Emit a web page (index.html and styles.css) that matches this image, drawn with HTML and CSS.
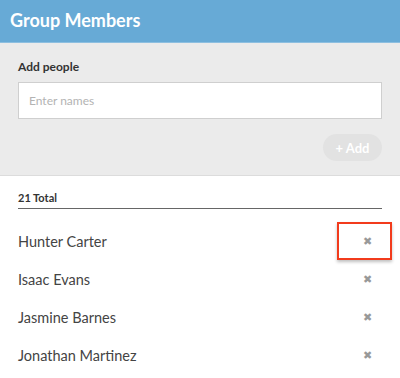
FILE: index.html
```html
<!DOCTYPE html>
<html lang="en">
<head>
  <meta charset="UTF-8">
  <meta name="viewport" content="width=device-width, initial-scale=1.0">
  <title>Group Members</title>
  <link rel="stylesheet" href="styles.css">
</head>
<body>
  <div class="panel">
    <div class="panel-header">Group Members</div>

    <!-- Add people form -->
    <div class="add-section">
      <label class="add-label" for="namesInput">Add people</label>
      <input id="namesInput" class="names-input" type="text" placeholder="Enter names">
      <div class="add-actions">
        <button class="add-button" disabled>+ Add</button>
      </div>
    </div>

    <!-- Member list -->
    <div class="members">
      <div class="members-total">21 Total</div>
      <div class="member-list">
        <div class="member-row">
          <span class="member-name">Hunter Carter</span>
          <span class="remove-wrap highlighted"><span class="remove">&#10006;</span></span>
        </div>
        <div class="member-row">
          <span class="member-name">Isaac Evans</span>
          <span class="remove-wrap"><span class="remove">&#10006;</span></span>
        </div>
        <div class="member-row">
          <span class="member-name">Jasmine Barnes</span>
          <span class="remove-wrap"><span class="remove">&#10006;</span></span>
        </div>
        <div class="member-row">
          <span class="member-name">Jonathan Martinez</span>
          <span class="remove-wrap"><span class="remove">&#10006;</span></span>
        </div>
      </div>
    </div>
  </div>
</body>
</html>
```

FILE: styles.css
```css
body {
  margin: 0;
  font-family: Lato, "Noto Sans", sans-serif;
  color: #444;
  background: #fff;
}

.panel {
  width: 400px;
}

.panel-header {
  height: 43px;
  box-sizing: border-box;
  padding: 9px 10px 0;
  background-color: #67aad6;
  border-bottom: 1px solid #8dbfe0;
  color: #fff;
  font-size: 18px;
  font-weight: bold;
}

.add-section {
  background-color: #ebebeb;
  border-bottom: 1px solid #dcdcdc;
  padding: 16px 18px 14px;
  display: flex;
  flex-direction: column;
}

.add-label {
  font-size: 12px;
  font-weight: bold;
  color: #333;
  margin-bottom: 8px;
}

.names-input {
  height: 37px;
  box-sizing: border-box;
  border: 1px solid #cfcfcf;
  background: #fff;
  padding: 0 10px;
  font-family: inherit;
  font-size: 12px;
  color: #444;
  outline: none;
}

.names-input::placeholder {
  color: #b3b3b3;
}

.add-actions {
  display: flex;
  justify-content: flex-end;
  margin-top: 15px;
}

.add-button {
  width: 59px;
  height: 27px;
  border: none;
  border-radius: 14px;
  background-color: #e2e2e2;
  color: #fff;
  font-family: inherit;
  font-size: 13px;
  font-weight: bold;
  padding: 0;
}

.members {
  padding: 15px 18px 0;
}

.members-total {
  font-size: 11px;
  font-weight: bold;
  color: #333;
  padding-bottom: 4px;
  border-bottom: 1px solid #666;
}

.member-list {
  margin-top: 13px;
}

.member-row {
  height: 38px;
  display: flex;
  align-items: center;
  justify-content: space-between;
}

.member-name {
  font-size: 14.5px;
  color: #444;
}

.remove-wrap {
  width: 55px;
  height: 38px;
  margin-right: -10px;
  display: flex;
  align-items: center;
  justify-content: center;
  box-sizing: border-box;
  border: 2px solid transparent;
}

.remove-wrap.highlighted {
  border-color: #f23b1c;
  box-shadow: 0 2px 3px rgba(0, 0, 0, 0.25);
}

.remove {
  font-size: 11px;
  color: #999;
  margin-left: 5px;
}
```
